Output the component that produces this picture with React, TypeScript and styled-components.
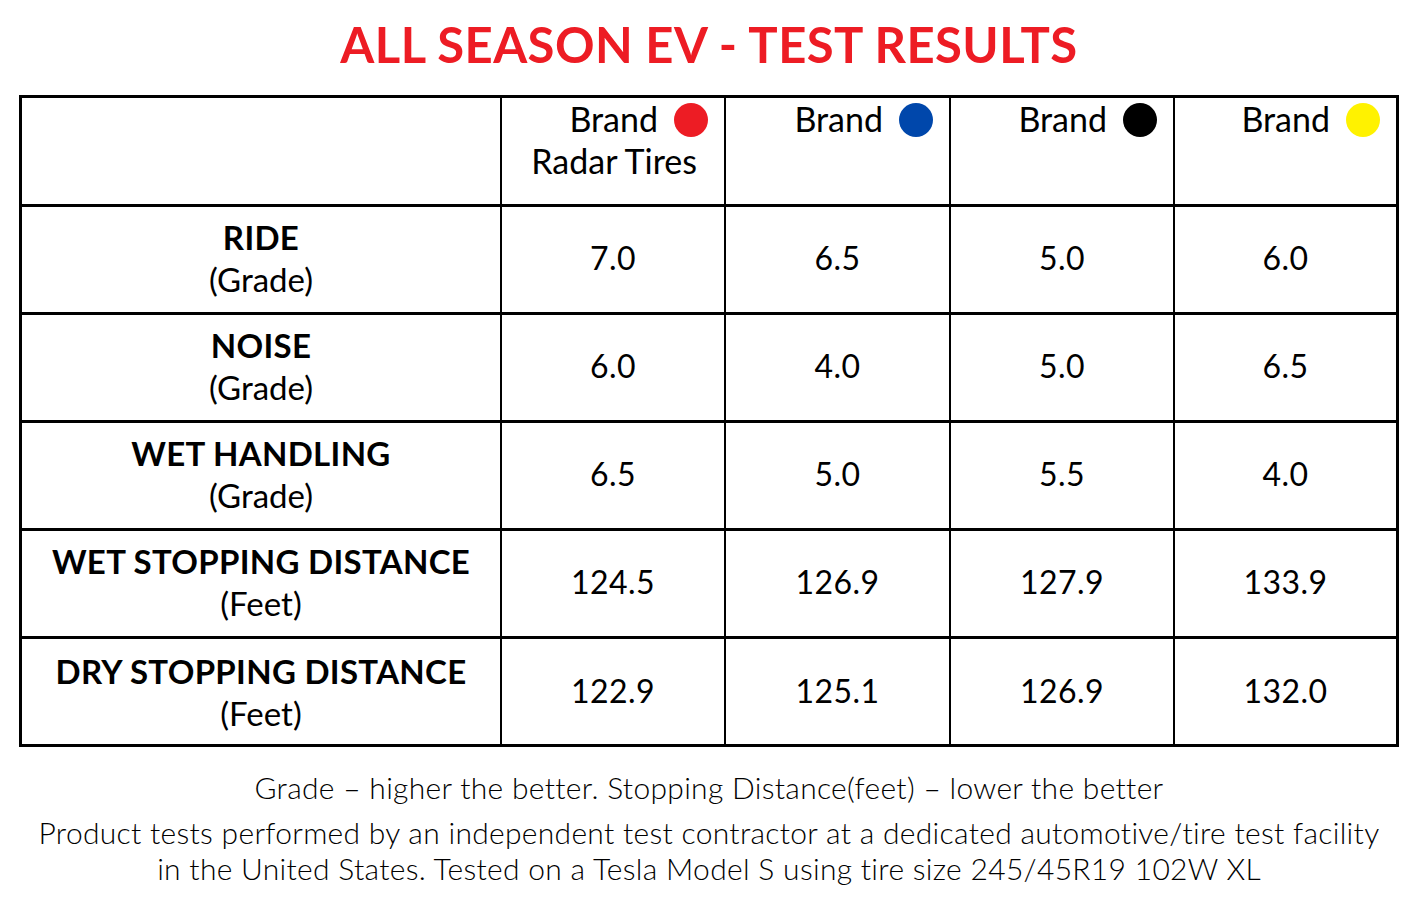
import React from "react";
import styled, { createGlobalStyle } from "styled-components";

const Global = createGlobalStyle`
  html, body { margin: 0; padding: 0; background: #fff; }
  body { font-family: Lato, "Noto Sans", sans-serif; color: #000; }
`;

const Page = styled.div`
  width: 1419px;
  height: 912px;
  box-sizing: border-box;
  padding: 16px 20px 0 19px;
  display: flex;
  flex-direction: column;
  align-items: stretch;
`;

const Title = styled.h1`
  margin: 0;
  height: 79px;
  text-align: center;
  color: #ed1c24;
  font-size: 49px;
  font-weight: 700;
  line-height: 56px;
  letter-spacing: 0.4px;
`;

const Table = styled.div`
  display: grid;
  grid-template-columns: 480px 224px 225px 224px 1fr;
  grid-template-rows: 109px repeat(5, 108px);
  border: 3px solid #000;
  box-sizing: border-box;
  width: 1380px;
  height: 652px;
`;

const Cell = styled.div<{ $last?: boolean; $bottom?: boolean }>`
  border-right: ${(p) => (p.$last ? "none" : "2.5px solid #000")};
  border-bottom: ${(p) => (p.$bottom ? "none" : "3px solid #000")};
  box-sizing: border-box;
  display: flex;
  flex-direction: column;
  align-items: center;
  justify-content: center;
  padding-bottom: 3px;
`;

const HeadCell = styled(Cell)`
  justify-content: flex-start;
  align-items: flex-end;
  padding: 0 16px 0 0;
`;

const BrandLine = styled.div`
  display: flex;
  align-items: center;
  gap: 16px;
  font-size: 34px;
  line-height: 42px;
`;

const Dot = styled.span<{ $c: string }>`
  width: 34px;
  height: 34px;
  border-radius: 50%;
  background: ${(p) => p.$c};
  display: inline-block;
  margin-top: 2px;
`;

const SubLine = styled.div`
  font-size: 34px;
  line-height: 42px;
  margin-right: 11px;
`;

const Label = styled.div`
  font-size: 33px;
  font-weight: 700;
  line-height: 42px;
  text-align: center;
  letter-spacing: 0.3px;
`;

const Unit = styled.div`
  font-size: 33px;
  line-height: 42px;
  text-align: center;
`;

const Value = styled.div`
  font-size: 32px;
  line-height: 40px;
  letter-spacing: 0.4px;
  margin-bottom: 1px;
`;

const Notes = styled.div`
  margin-top: 22px;
  display: flex;
  flex-direction: column;
  align-items: center;
  font-size: 30px;
  font-weight: 300;
  letter-spacing: 0.3px;
`;

const Note = styled.div<{ $gap?: number }>`
  line-height: 36px;
  margin-top: ${(p) => p.$gap ?? 0}px;
  white-space: nowrap;
`;

const brands = [
  { c: "#ed1c24", sub: "Radar Tires" },
  { c: "#0047ab", sub: "" },
  { c: "#000000", sub: "" },
  { c: "#fff200", sub: "" },
];

const rows = [
  { label: "RIDE", unit: "(Grade)", v: ["7.0", "6.5", "5.0", "6.0"] },
  { label: "NOISE", unit: "(Grade)", v: ["6.0", "4.0", "5.0", "6.5"] },
  { label: "WET HANDLING", unit: "(Grade)", v: ["6.5", "5.0", "5.5", "4.0"] },
  { label: "WET STOPPING DISTANCE", unit: "(Feet)", v: ["124.5", "126.9", "127.9", "133.9"] },
  { label: "DRY STOPPING DISTANCE", unit: "(Feet)", v: ["122.9", "125.1", "126.9", "132.0"] },
];

export default function App() {
  return (
    <>
      <Global />
      <Page>
        <Title>ALL SEASON EV - TEST RESULTS</Title>
        <Table>
          <Cell />
          {brands.map((b, i) => (
            <HeadCell key={i} $last={i === 3}>
              <BrandLine>
                Brand <Dot $c={b.c} />
              </BrandLine>
              {b.sub && <SubLine>{b.sub}</SubLine>}
            </HeadCell>
          ))}
          {rows.map((r, ri) => (
            <React.Fragment key={ri}>
              <Cell $bottom={ri === rows.length - 1}>
                <Label>{r.label}</Label>
                <Unit>{r.unit}</Unit>
              </Cell>
              {r.v.map((v, vi) => (
                <Cell key={vi} $last={vi === 3} $bottom={ri === rows.length - 1}>
                  <Value>{v}</Value>
                </Cell>
              ))}
            </React.Fragment>
          ))}
        </Table>
        <Notes>
          <Note>Grade – higher the better. Stopping Distance(feet) – lower the better</Note>
          <Note $gap={9}>
            Product tests performed by an independent test contractor at a dedicated automotive/tire test facility
          </Note>
          <Note>in the United States. Tested on a Tesla Model S using tire size 245/45R19 102W XL</Note>
        </Notes>
      </Page>
    </>
  );
}
